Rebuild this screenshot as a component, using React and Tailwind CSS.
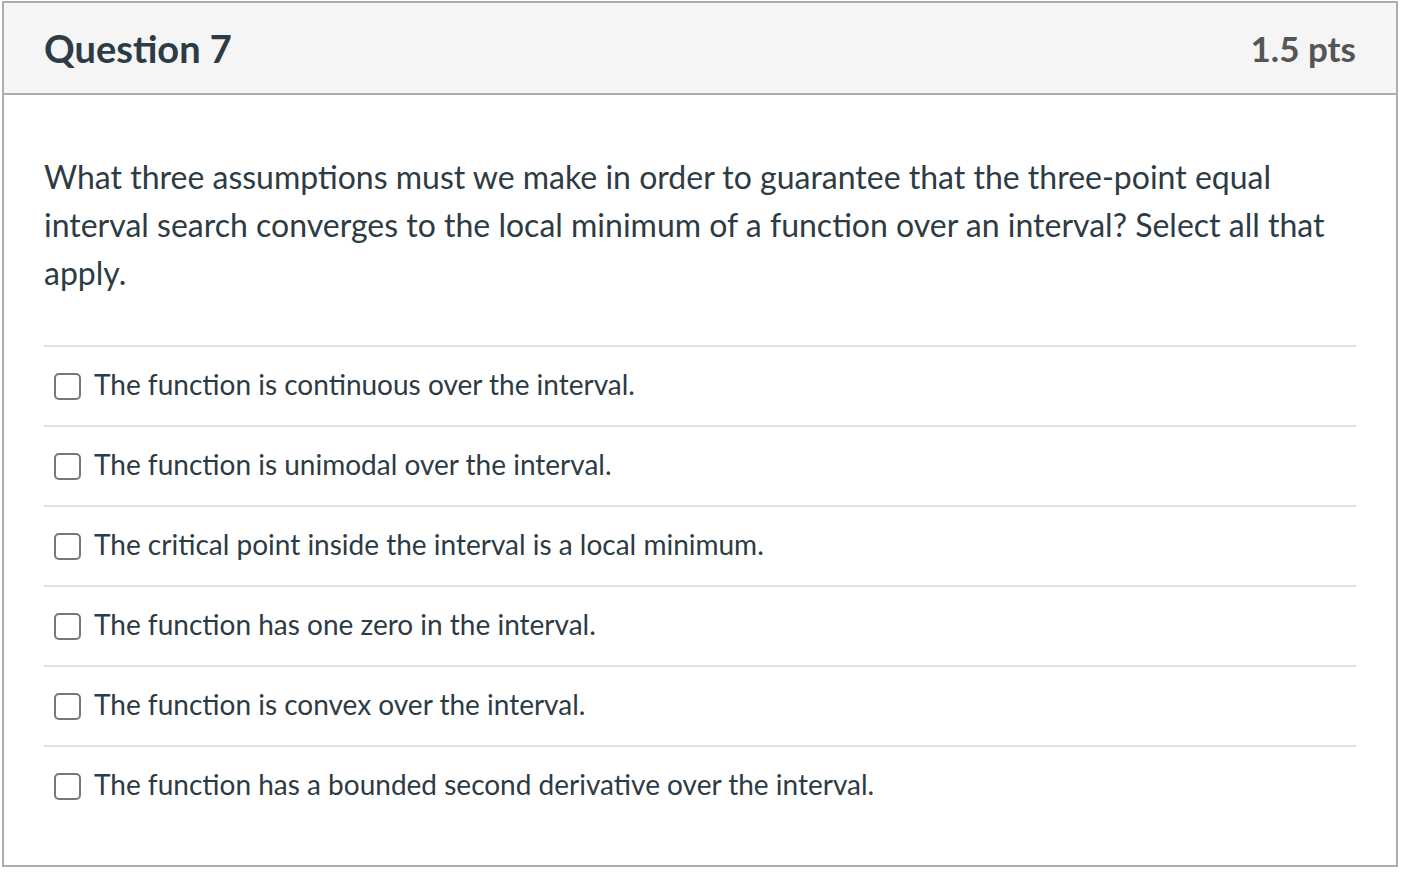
import React from 'react'

const answers = [
  'The function is continuous over the interval.',
  'The function is unimodal over the interval.',
  'The critical point inside the interval is a local minimum.',
  'The function has one zero in the interval.',
  'The function is convex over the interval.',
  'The function has a bounded second derivative over the interval.',
]

export default function App() {
  return (
    <div className="w-[1402px] h-[872px] bg-white pt-[1px] pl-[2px]" style={{ fontFamily: 'Lato, "Open Sans", sans-serif' }}>
      <div className="w-[1396px] h-[866px] border-2 border-[#adadad] flex flex-col">
        <div className="h-[92px] bg-[#f5f5f5] border-b-2 border-[#adadad] flex items-center justify-between px-[40px]">
          <h2 className="text-[38px] font-bold text-[#2d3b45] leading-none">Question 7</h2>
          <span className="text-[35px] font-bold text-[#555555] leading-none">1.5 pts</span>
        </div>
        <div className="px-[40px] pt-[58px]">
          <p className="text-[32px] leading-[48px] text-[#2d3b45]">
            What three assumptions must we make in order to guarantee that the three-point equal interval search converges to the local minimum of a function over an interval? Select all that apply.
          </p>
          <div className="mt-[48px]">
            {answers.map((a) => (
              <label key={a} className="flex items-center h-[80px] border-t-2 border-[#e0e0e0] pl-[10px] gap-[13px]">
                <span className="w-[27px] h-[27px] border-2 border-[#777777] rounded-[5px] bg-white shrink-0" />
                <span className="text-[28px] text-[#2d3b45] mb-[4px]">{a}</span>
              </label>
            ))}
          </div>
        </div>
      </div>
    </div>
  )
}
